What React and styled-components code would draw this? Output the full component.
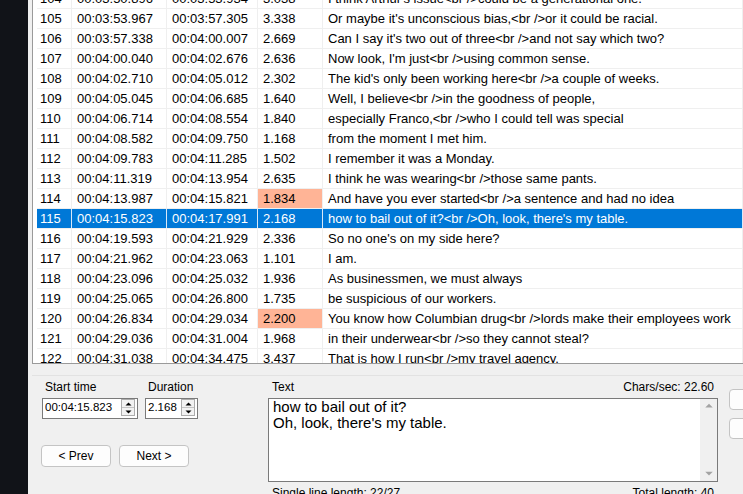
import React from 'react';
import styled, { createGlobalStyle } from 'styled-components';

const GlobalStyle = createGlobalStyle`
  html, body {
    margin: 0;
    padding: 0;
    background: #f0f0f0;
  }
  body {
    font-family: "Liberation Sans", Arial, sans-serif;
    color: #000;
    overflow: hidden;
  }
`;

const Window = styled.div`
  display: flex;
  width: 743px;
  height: 494px;
  overflow: hidden;
`;

const SideStrip = styled.div`
  width: 28px;
  flex-shrink: 0;
  background: #111318;
`;

const Main = styled.div`
  flex: 1;
  min-width: 0;
  display: flex;
  flex-direction: column;
  background: #f0f0f0;
`;

/* subtitle grid */

const ListView = styled.div`
  height: 364px;
  flex-shrink: 0;
  margin-left: 4px;
  padding-left: 4px;
  box-sizing: border-box;
  background: #fff;
  border-left: 1px solid #9a9a9a;
  border-bottom: 1px solid #9a9a9a;
  overflow: hidden;
`;

const Rows = styled.div`
  margin-top: -11px;
`;

const Row = styled.div`
  display: flex;
  height: 20px;
  box-sizing: border-box;
  border-bottom: 1px solid #efefef;
  background: ${p => (p.$selected ? '#0078d7' : 'transparent')};
  color: ${p => (p.$selected ? '#fff' : '#000')};
`;

const Cell = styled.div`
  flex: ${p => (p.$width ? `0 0 ${p.$width}px` : '1 1 auto')};
  min-width: 0;
  box-sizing: border-box;
  padding-left: ${p => p.$pad || 5}px;
  border-right: 1px solid ${p => (p.$selected ? '#d9e8f7' : '#efefef')};
  background: ${p => (p.$warn ? '#ffb496' : 'transparent')};
  font-size: 13px;
  line-height: 19px;
  white-space: nowrap;
  overflow: hidden;
`;

/* editor below the grid */

const EditorArea = styled.div`
  flex: 1;
  padding-top: 11px;
`;

const Editor = styled.div`
  display: flex;
  margin-left: 4px;
  padding-top: 4px;
  border-top: 1px solid #e2e2e2;
`;

const TimingColumn = styled.div`
  width: 236px;
  flex-shrink: 0;
  box-sizing: border-box;
  padding-left: 9px;
`;

const FieldRow = styled.div`
  display: flex;
  gap: 7px;
  margin-left: 1px;
`;

const Field = styled.div`
  width: ${p => p.$width}px;
`;

const Label = styled.div`
  padding-left: 3px;
  font-size: 12px;
  line-height: 14px;
  height: 14px;
  margin-bottom: 4px;
  white-space: nowrap;
`;

const SpinBox = styled.div`
  display: flex;
  align-items: flex-start;
  height: 21px;
  box-sizing: border-box;
  border: 1px solid #7a7a7a;
  background: #fff;
`;

const SpinValue = styled.span`
  flex: 1;
  padding-left: 2px;
  font-size: 11.5px;
  line-height: 17px;
  white-space: nowrap;
`;

const Spinner = styled.div`
  display: flex;
  flex-direction: column;
  width: 14px;
  height: 17px;
  margin-right: 2px;
  box-sizing: border-box;
  border: 1px solid #adadad;
  background: #f2f2f2;
`;

const SpinHalf = styled.div`
  flex: 1;
  display: flex;
  align-items: center;
  justify-content: center;
  border-top: ${p => (p.$lower ? '1px solid #c4c4c4' : 'none')};
`;

const ButtonRow = styled.div`
  display: flex;
  gap: 8px;
  margin-top: 26px;
`;

const NavButton = styled.button`
  width: 70px;
  height: 22px;
  padding: 0;
  box-sizing: border-box;
  border: 1px solid #c4c4c4;
  border-radius: 4px;
  background: #fdfdfd;
  font-family: "Liberation Sans", Arial, sans-serif;
  font-size: 12px;
  color: #000;
`;

const TextColumn = styled.div`
  width: 450px;
  flex-shrink: 0;
`;

const TextHeader = styled.div`
  display: flex;
  justify-content: space-between;
  padding: 0 4px;
  font-size: 12px;
  line-height: 14px;
  height: 14px;
  margin-bottom: 4px;
`;

const TextBox = styled.div`
  display: flex;
  height: 84px;
  box-sizing: border-box;
  border: 1px solid #7a7a7a;
  background: #fff;
`;

const TextContent = styled.div`
  flex: 1;
  padding: 0 4px;
  font-size: 15px;
  line-height: 16px;
`;

const ScrollTrack = styled.div`
  display: flex;
  flex-direction: column;
  justify-content: space-between;
  width: 17px;
  padding-bottom: 1px;
  background: #f0f0f0;
`;

const ScrollArrow = styled.div`
  display: flex;
  align-items: center;
  justify-content: center;
  height: 13px;
`;

const TextFooter = styled(TextHeader)`
  margin: 4px 0 0;
`;

const SideColumn = styled.div`
  display: flex;
  flex-direction: column;
  gap: 8px;
  margin-left: 11px;
  padding-top: 9px;
`;

const SideButton = styled.div`
  width: 80px;
  height: 21px;
  box-sizing: border-box;
  border: 1px solid #c4c4c4;
  border-radius: 4px;
  background: #fdfdfd;
`;

const Triangle = ({ down, size = 5, color = '#000' }) => (
  <svg width={size + 2} height={Math.ceil(size / 2) + 1} viewBox="0 0 7 4">
    {down
      ? <polygon points="0.5,0.5 6.5,0.5 3.5,3.5" fill={color} />
      : <polygon points="0.5,3.5 6.5,3.5 3.5,0.5" fill={color} />}
  </svg>
);

const subtitles = [
  [104, '00:03:50.896', '00:03:53.934', '3.038', "I think Arthur's issue<br />could be a generational one."],
  [105, '00:03:53.967', '00:03:57.305', '3.338', "Or maybe it's unconscious bias,<br />or it could be racial."],
  [106, '00:03:57.338', '00:04:00.007', '2.669', "Can I say it's two out of three<br />and not say which two?"],
  [107, '00:04:00.040', '00:04:02.676', '2.636', "Now look, I'm just<br />using common sense."],
  [108, '00:04:02.710', '00:04:05.012', '2.302', "The kid's only been working here<br />a couple of weeks."],
  [109, '00:04:05.045', '00:04:06.685', '1.640', 'Well, I believe<br />in the goodness of people,'],
  [110, '00:04:06.714', '00:04:08.554', '1.840', 'especially Franco,<br />who I could tell was special'],
  [111, '00:04:08.582', '00:04:09.750', '1.168', 'from the moment I met him.'],
  [112, '00:04:09.783', '00:04:11.285', '1.502', 'I remember it was a Monday.'],
  [113, '00:04:11.319', '00:04:13.954', '2.635', 'I think he was wearing<br />those same pants.'],
  [114, '00:04:13.987', '00:04:15.821', '1.834', 'And have you ever started<br />a sentence and had no idea', true],
  [115, '00:04:15.823', '00:04:17.991', '2.168', "how to bail out of it?<br />Oh, look, there's my table."],
  [116, '00:04:19.593', '00:04:21.929', '2.336', "So no one's on my side here?"],
  [117, '00:04:21.962', '00:04:23.063', '1.101', 'I am.'],
  [118, '00:04:23.096', '00:04:25.032', '1.936', 'As businessmen, we must always'],
  [119, '00:04:25.065', '00:04:26.800', '1.735', 'be suspicious of our workers.'],
  [120, '00:04:26.834', '00:04:29.034', '2.200', 'You know how Columbian drug<br />lords make their employees work', true],
  [121, '00:04:29.036', '00:04:31.004', '1.968', 'in their underwear<br />so they cannot steal?'],
  [122, '00:04:31.038', '00:04:34.475', '3.437', 'That is how I run<br />my travel agency.'],
];

const SELECTED = 115;

const TimeField = ({ label, value, width }) => (
  <Field $width={width}>
    <Label>{label}</Label>
    <SpinBox>
      <SpinValue>{value}</SpinValue>
      <Spinner>
        <SpinHalf><Triangle /></SpinHalf>
        <SpinHalf $lower><Triangle down /></SpinHalf>
      </Spinner>
    </SpinBox>
  </Field>
);

export default function App() {
  return (
    <Window>
      <GlobalStyle />
      <SideStrip />
      <Main>
        <ListView>
          <Rows>
            {subtitles.map(([num, start, end, dur, text, warn]) => {
              const sel = num === SELECTED;
              return (
                <Row key={num} $selected={sel}>
                  <Cell $width={35} $pad={3} $selected={sel}>{num}</Cell>
                  <Cell $width={95} $selected={sel}>{start}</Cell>
                  <Cell $width={91} $selected={sel}>{end}</Cell>
                  <Cell $width={65} $selected={sel} $warn={warn}>{dur}</Cell>
                  <Cell $selected={sel}>{text}</Cell>
                </Row>
              );
            })}
          </Rows>
        </ListView>

        <EditorArea>
          <Editor>
            <TimingColumn>
              <FieldRow>
                <TimeField label="Start time" value="00:04:15.823" width={96} />
                <TimeField label="Duration" value="2.168" width={53} />
              </FieldRow>
              <ButtonRow>
                <NavButton>&lt; Prev</NavButton>
                <NavButton>Next &gt;</NavButton>
              </ButtonRow>
            </TimingColumn>

            <TextColumn>
              <TextHeader>
                <span>Text</span>
                <span>Chars/sec: 22.60</span>
              </TextHeader>
              <TextBox>
                <TextContent>
                  how to bail out of it?<br />
                  Oh, look, there's my table.
                </TextContent>
                <ScrollTrack>
                  <ScrollArrow><Triangle size={8} color="#a3a3a3" /></ScrollArrow>
                  <ScrollArrow><Triangle down size={8} color="#a3a3a3" /></ScrollArrow>
                </ScrollTrack>
              </TextBox>
              <TextFooter>
                <span>Single line length: 22/27</span>
                <span>Total length: 40</span>
              </TextFooter>
            </TextColumn>

            <SideColumn>
              <SideButton />
              <SideButton />
            </SideColumn>
          </Editor>
        </EditorArea>
      </Main>
    </Window>
  );
}
